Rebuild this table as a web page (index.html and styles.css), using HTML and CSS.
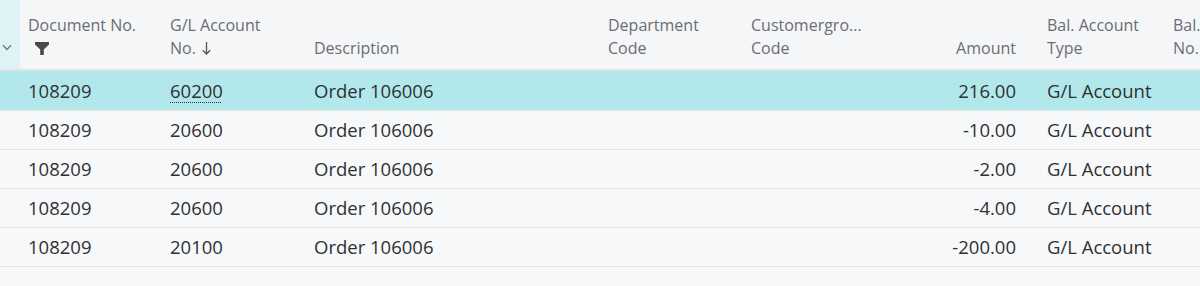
FILE: index.html
```html
<!DOCTYPE html>
<html lang="en">
<head>
<meta charset="utf-8">
<title>General Ledger Entries</title>
<link rel="stylesheet" href="styles.css">
</head>
<body>
<div class="grid">
  <div class="row head">
    <div class="strip">
      <svg class="chev" width="10" height="7" viewBox="0 0 10 7"><path d="M1 1.2 L5 5.4 L9 1.2" fill="none" stroke="#7a7a7a" stroke-width="1.4"/></svg>
    </div>
    <div class="cell hc"><span>Document No.</span><span class="ic"><svg width="14" height="13" viewBox="0 0 14 13"><path d="M0 0H14V2.4L8.8 7.4V13H5.2V7.4L0 2.4Z" fill="#4a4a4a"/></svg></span></div>
    <div class="cell hc"><span>G/L Account</span><span>No. <svg class="arr" width="9" height="13" viewBox="0 0 9 13"><path d="M4.5 0V12M0.8 8.3L4.5 12L8.2 8.3" fill="none" stroke="#555" stroke-width="1.3"/></svg></span></div>
    <div class="cell hc"><span>Description</span></div>
    <div class="cell hc"><span>Department</span><span>Code</span></div>
    <div class="cell hc"><span>Customergro...</span><span>Code</span></div>
    <div class="cell hc num"><span>Amount</span></div>
    <div class="cell hc"><span>Bal. Account</span><span>Type</span></div>
    <div class="cell hc"><span>Bal.</span><span>No.</span></div>
  </div>

  <div class="row data sel">
    <div class="strip"></div>
    <div class="cell">108209</div>
    <div class="cell"><span class="link">60200</span></div>
    <div class="cell">Order 106006</div>
    <div class="cell"></div>
    <div class="cell"></div>
    <div class="cell num">216.00</div>
    <div class="cell">G/L Account</div>
    <div class="cell"></div>
  </div>
  <div class="row data">
    <div class="strip"></div>
    <div class="cell">108209</div>
    <div class="cell">20600</div>
    <div class="cell">Order 106006</div>
    <div class="cell"></div>
    <div class="cell"></div>
    <div class="cell num">-10.00</div>
    <div class="cell">G/L Account</div>
    <div class="cell"></div>
  </div>
  <div class="row data">
    <div class="strip"></div>
    <div class="cell">108209</div>
    <div class="cell">20600</div>
    <div class="cell">Order 106006</div>
    <div class="cell"></div>
    <div class="cell"></div>
    <div class="cell num">-2.00</div>
    <div class="cell">G/L Account</div>
    <div class="cell"></div>
  </div>
  <div class="row data">
    <div class="strip"></div>
    <div class="cell">108209</div>
    <div class="cell">20600</div>
    <div class="cell">Order 106006</div>
    <div class="cell"></div>
    <div class="cell"></div>
    <div class="cell num">-4.00</div>
    <div class="cell">G/L Account</div>
    <div class="cell"></div>
  </div>
  <div class="row data">
    <div class="strip"></div>
    <div class="cell">108209</div>
    <div class="cell">20100</div>
    <div class="cell">Order 106006</div>
    <div class="cell"></div>
    <div class="cell"></div>
    <div class="cell num">-200.00</div>
    <div class="cell">G/L Account</div>
    <div class="cell"></div>
  </div>
</div>
</body>
</html>
```

FILE: styles.css
```css
html, body {
  margin: 0;
  padding: 0;
  background: #f7f8fa;
  overflow: hidden;
  width: 1200px;
  height: 286px;
  font-family: "Open Sans", "Noto Sans", sans-serif;
}

.grid {
  display: flex;
  flex-direction: column;
  width: 1200px;
}

.row {
  display: grid;
  grid-template-columns: 20px 142px 144px 294px 143px 137px 159px 126px 1fr;
}

.head {
  height: 69px;
  background: #f5f6f8;
  border-bottom: 2px solid #e2e3e5;
  color: #6a6d73;
  font-size: 16px;
  line-height: 23px;
}

.head .strip {
  background: #dff2f5;
  display: flex;
  align-items: flex-start;
  padding: 44px 0 0 2px;
  box-sizing: border-box;
}

.chev {
  display: block;
}

.hc {
  display: flex;
  flex-direction: column;
  justify-content: flex-end;
  padding: 0 0 9px 8px;
  white-space: nowrap;
  overflow: hidden;
}

.hc.num {
  align-items: flex-end;
  padding-right: 23px;
}

.ic {
  display: flex;
  align-items: center;
  height: 23px;
  padding-left: 7px;
}

.arr {
  vertical-align: -1px;
  margin-left: 2px;
}

.data {
  height: 38px;
  border-bottom: 1px solid #e1e2e4;
  color: #2f3133;
  font-size: 18.5px;
  line-height: 38px;
}

.data.sel {
  height: 39px;
  line-height: 40px;
}

.data .cell {
  padding-left: 8px;
  white-space: nowrap;
  overflow: hidden;
}

.data .cell.num {
  text-align: right;
  padding-right: 23px;
  padding-left: 0;
}

.sel {
  background: #b2e8eb;
}

.link {
  text-decoration: underline dotted #333;
  text-underline-offset: 4px;
  text-decoration-thickness: 1px;
}
```
